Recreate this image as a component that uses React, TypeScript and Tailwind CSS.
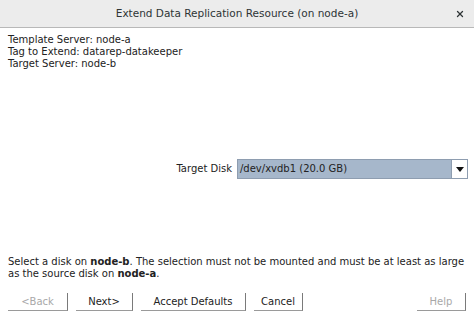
import { X } from "lucide-react";

const font = { fontFamily: '"DejaVu Sans", sans-serif' };

type BtnProps = { label: string; width: string; disabled?: boolean };

const WizardButton = ({ label, width, disabled }: BtnProps) => (
  <div
    className={`${width} flex h-[18px] items-center justify-center border-r border-b border-r-[#7a7a7a] border-b-[#9a9a9a] text-[10px] ${
      disabled ? "text-[#a8a8a8]" : "text-[#222]"
    }`}
  >
    {label}
  </div>
);

export default function App() {
  return (
    <div
      className="flex h-[320px] w-[474px] flex-col overflow-hidden bg-white text-[#222]"
      style={font}
    >
      {/* title bar */}
      <div className="relative flex h-[28px] shrink-0 items-center justify-center border-b border-[#b8b8b8] bg-[#ececec]">
        <span className="text-[10.5px] text-[#2e3436]">
          Extend Data Replication Resource (on node-a)
        </span>
        <X className="absolute right-[9px] top-[9px] size-[10px] text-[#2e3436]" strokeWidth={3} />
      </div>

      <div className="flex flex-1 flex-col px-[8px] pt-[6px] text-[10px] leading-[12px]">
        <div>Template Server: node-a</div>
        <div>Tag to Extend: datarep-datakeeper</div>
        <div>Target Server: node-b</div>

        <div className="mt-[89px] -mr-[2px] flex items-center justify-end gap-[5px]">
          <span>Target Disk</span>
          <div className="flex h-[20px] w-[231px] border border-[#8e9db0] bg-[#a6b7cb]">
            <div className="flex flex-1 items-center pl-[2px]">/dev/xvdb1 (20.0 GB)</div>
            <div className="flex w-[16px] items-center justify-center border-l border-[#8e9db0] bg-white">
              <svg width="8" height="5" viewBox="0 0 8 5">
                <path d="M0 0h8L4 5z" fill="#111" />
              </svg>
            </div>
          </div>
        </div>

        <div className="mt-[77px]">
          Select a disk on <b>node-b</b>. The selection must not be mounted and must be at least as large
          <br />
          as the source disk on <b>node-a</b>.
        </div>

        <div className="mt-[13px] flex items-center">
          <div className="flex gap-[8px]">
            <WizardButton label="<Back" width="w-[60px]" disabled />
            <WizardButton label="Next>" width="w-[57px]" />
            <WizardButton label="Accept Defaults" width="w-[105px]" />
            <WizardButton label="Cancel" width="w-[49px]" />
          </div>
          <div className="ml-auto">
            <WizardButton label="Help" width="w-[49px]" disabled />
          </div>
        </div>
      </div>
    </div>
  );
}
